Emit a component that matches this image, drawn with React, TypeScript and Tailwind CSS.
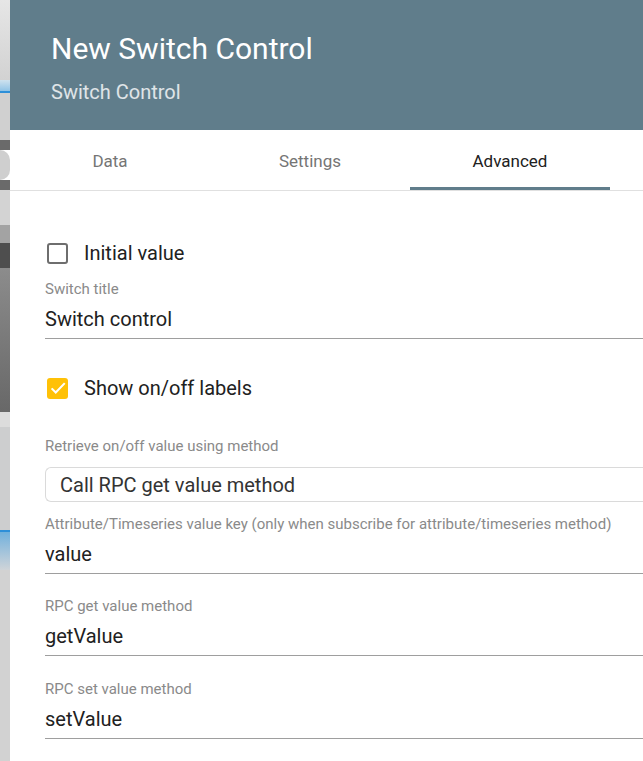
import React from 'react';

function Checkbox({ checked }: { checked?: boolean }) {
  if (checked) {
    return (
      <div className="w-[21px] h-[21px] rounded-[3px] bg-[#ffc107] flex items-center justify-center">
        <svg width="18" height="18" viewBox="0 0 24 24" fill="none">
          <path d="M3.5 12.5l5.5 5.5L21 5.5" stroke="#fff" strokeWidth="2.8" />
        </svg>
      </div>
    );
  }
  return <div className="w-[21px] h-[21px] rounded-[3px] border-2 border-[#6e6e6e] bg-white" />;
}

function Label({ text, className = '' }: { text: string; className?: string }) {
  return <div className={`h-4 leading-4 text-[15px] text-[#8a8a8a] ${className}`}>{text}</div>;
}

function Input({ value, className = '' }: { value: string; className?: string }) {
  return (
    <div className={`h-[39px] flex items-center border-b border-[#9e9e9e] text-[20px] text-[#212121] ${className}`}>
      {value}
    </div>
  );
}

function LeftStrip() {
  return (
    <div className="w-[10px] shrink-0 flex flex-col">
      <div className="h-[80px] bg-gradient-to-b from-[#e6e6e6] to-[#d2d2d2]" />
      <div className="h-[13px] bg-gradient-to-b from-[#cfe2ee] to-[#8fc3e6] border-b-2 border-[#2d8fd8]" />
      <div className="h-[47px] bg-[#d0d0d0]" />
      <div className="h-[10px] bg-[#6a6a6a]" />
      <div className="h-[30px] bg-[#cfcfcf] rounded-r-full" />
      <div className="h-[10px] bg-[#6a6a6a]" />
      <div className="h-[35px] bg-[#d3d3d3]" />
      <div className="h-[18px] bg-[#a3a3a3]" />
      <div className="h-[25px] bg-[#4e4e4e]" />
      <div className="h-[144px] bg-gradient-to-b from-[#8c8c8c] to-[#686868]" />
      <div className="h-[15px] bg-[#dcdcdc]" />
      <div className="h-[103px] bg-[#cdcecf]" />
      <div className="h-[40px] bg-gradient-to-b from-[#6fb0dc] to-[#cfd4d8] border-t-2 border-[#2d8fd8]" />
      <div className="flex-1 bg-[#d2d2d2]" />
    </div>
  );
}

export default function App() {
  const tabs = ['Data', 'Settings', 'Advanced'];
  return (
    <div className="w-[643px] h-[761px] overflow-hidden flex bg-white" style={{ fontFamily: 'Roboto, "Noto Sans", sans-serif' }}>
      <LeftStrip />
      <div className="flex-1 flex flex-col min-w-0">
        <div className="h-[130px] bg-[#607d8b] pl-[41px] pt-[31px]">
          <div className="text-[30px] leading-[36px] text-white">New Switch Control</div>
          <div className="text-[20px] leading-[24px] mt-[13px] text-white/80">Switch Control</div>
        </div>

        <div className="h-[61px] flex border-b border-[#e0e0e0]">
          {tabs.map((t) => (
            <div
              key={t}
              className={`w-[200px] flex items-center justify-center pt-[3px] text-[17px] relative ${
                t === 'Advanced' ? 'text-[#212121]' : 'text-[#757575]'
              }`}
            >
              {t}
              {t === 'Advanced' && <div className="absolute left-0 right-0 bottom-0 h-[3px] bg-[#607d8b]" />}
            </div>
          ))}
        </div>

        <div className="pl-[35px] flex flex-col">
          <div className="h-10 mt-[42px] flex items-center gap-[16px] pl-[2px] text-[20px] text-[#212121]">
            <Checkbox />
            <span>Initial value</span>
          </div>

          <Label text="Switch title" className="mt-[8px]" />
          <Input value="Switch control" className="mt-[3px]" />

          <div className="h-10 mt-[29px] flex items-center gap-[16px] pl-[2px] text-[20px] text-[#212121]">
            <Checkbox checked />
            <span>Show on/off labels</span>
          </div>

          <Label text="Retrieve on/off value using method" className="mt-[30px]" />
          <div className="h-[35px] mt-[13px] border border-[#dadada] rounded-l-[6px] border-r-0 pl-[14px] flex items-center text-[20px] text-[#333]">
            Call RPC get value method
          </div>

          <Label text="Attribute/Timeseries value key (only when subscribe for attribute/timeseries method)" className="mt-[14px]" />
          <Input value="value" className="mt-[3px]" />

          <Label text="RPC get value method" className="mt-[24px]" />
          <Input value="getValue" className="mt-[3px]" />

          <Label text="RPC set value method" className="mt-[25px]" />
          <Input value="setValue" className="mt-[3px]" />
        </div>
      </div>
    </div>
  );
}
